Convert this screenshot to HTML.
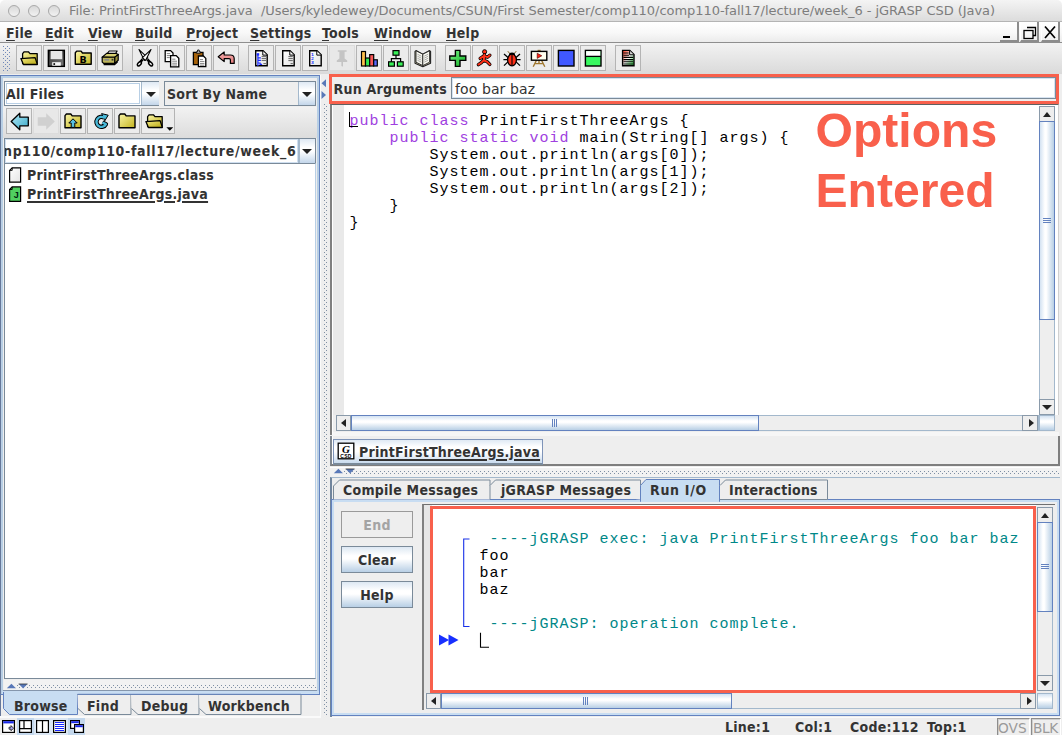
<!DOCTYPE html>
<html><head><meta charset="utf-8"><title>jGRASP</title>
<style>
*{box-sizing:border-box;margin:0;padding:0}
html,body{width:1062px;height:735px;overflow:hidden;background:#eeeeee}
body{position:relative;font-family:"DejaVu Sans Condensed","DejaVu Sans","Liberation Sans",sans-serif;font-size:14px;letter-spacing:0.250px;font-weight:bold;color:#333;}
.a{position:absolute}
.t{position:absolute;white-space:pre;line-height:16px}
u{text-decoration:underline;text-underline-offset:1.500px}
#title{left:0;top:0;width:1062px;height:22px;background:linear-gradient(#f4f4f4,#dcdcdc);border-bottom:1px solid #b4b4b4}
.tl{position:absolute;top:4.500px;width:12.500px;height:12.500px;border-radius:50%;border:1px solid #a9a9a9;background:linear-gradient(#d8d8d8,#f2f2f2)}
#title .t{font-family:"DejaVu Sans","Liberation Sans",sans-serif;font-size:13px;font-weight:normal;color:#7d7d7d;top:3px;left:69px;letter-spacing:-0.048px}
#menubar{left:0;top:22px;width:1062px;height:21px;background:linear-gradient(#ffffff 0%,#f8f8f8 55%,#ebebeb 100%);border-bottom:1px solid #8e8e8e}
#menubar .t{top:3px;color:#333}
.wb{position:absolute;top:0;height:20px;width:19px;border-right:2px solid #8c8c8c;border-bottom:2px solid #8c8c8c;border-left:1px solid #fff}
#toolbar{left:0;top:43px;width:1062px;height:31px;background:linear-gradient(#f2f2f2,#dadada)}
.tb{position:absolute;width:26px;height:26px;border:1px solid #b4b4b4;background:#ececec}
.tb.dis{border-color:#dcdcdc;background:#e8e8e8}
.dots{background-image:radial-gradient(circle at 0.500px 0.500px,#7088b8 0.600px,transparent 0.900px),radial-gradient(circle at 0.500px 0.500px,#7088b8 0.600px,transparent 0.900px);background-size:4px 4px,4px 4px;background-position:0 0,2px 2px}
.dots2{background-image:radial-gradient(circle at 0.500px 0.500px,#7f8fa4 0.550px,transparent 0.850px),radial-gradient(circle at 0.500px 0.500px,#7f8fa4 0.550px,transparent 0.850px);background-size:4px 4px,4px 4px;background-position:0 0,2px 2px}
.btn{background:linear-gradient(#dde8f3 0%,#ffffff 35%,#ffffff 48%,#b8cfe5 100%);border:1px solid #7a8a99}
.cb{border:1px solid #7a8a99;background:#fff;box-shadow:0 0 0 0 #000}
.cbb{background:linear-gradient(#dfe9f4 0%,#ffffff 35%,#ffffff 50%,#c3d6ea 100%);border-left:1px solid #a3b8cc}
.sbtn{background:#eeeeee;border:1px solid #8a9aaa}
.sb-h{background:linear-gradient(#d3e2f2 0%,#ffffff 35%,#ffffff 45%,#b8cfe5 100%);border:1px solid #6382bf}
.sb-v{background:linear-gradient(90deg,#d3e2f2 0%,#ffffff 35%,#ffffff 45%,#b8cfe5 100%);border:1px solid #6382bf}
.grip-h{position:absolute;left:50%;top:3px;width:5px;height:8px;margin-left:-3px;background:repeating-linear-gradient(90deg,#6382bf 0,#6382bf 1px,transparent 1px,transparent 2px)}
.grip-v{position:absolute;top:50%;left:3px;height:5px;width:8px;margin-top:-3px;background:repeating-linear-gradient(#6382bf 0,#6382bf 1px,transparent 1px,transparent 2px)}
.arr-d{position:absolute;width:0;height:0;border-left:5px solid transparent;border-right:5px solid transparent;border-top:5px solid #222}
.arr-u{position:absolute;width:0;height:0;border-left:4.500px solid transparent;border-right:4.500px solid transparent;border-bottom:5px solid #222}
.arr-l{position:absolute;width:0;height:0;border-top:4.500px solid transparent;border-bottom:4.500px solid transparent;border-right:5px solid #222}
.arr-r{position:absolute;width:0;height:0;border-top:4.500px solid transparent;border-bottom:4.500px solid transparent;border-left:5px solid #222}
.mono{font-family:"Liberation Mono","DejaVu Sans Mono",monospace;font-weight:normal;font-size:15px;letter-spacing:1px;line-height:17px;white-space:pre;position:absolute}
.kw{color:#a040e0}
.tl2{color:#008888}
</style></head><body>
<svg width="0" height="0" style="position:absolute"><defs>
<linearGradient id="gy" x1="0" y1="0" x2="1" y2="1"><stop offset="0" stop-color="#fbf6a8"/><stop offset="1" stop-color="#c2b21c"/></linearGradient>
<linearGradient id="gy2" x1="0" y1="0" x2="1" y2="1"><stop offset="0" stop-color="#f3ea84"/><stop offset="1" stop-color="#b8a810"/></linearGradient>
<linearGradient id="gg" x1="0" y1="0" x2="1" y2="1"><stop offset="0" stop-color="#7cf58a"/><stop offset="1" stop-color="#0cae1e"/></linearGradient>
<linearGradient id="gk" x1="0" y1="0" x2="1" y2="1"><stop offset="0" stop-color="#2e2e2e"/><stop offset="1" stop-color="#7a7a7a"/></linearGradient>
<linearGradient id="gd" x1="0" y1="0" x2="1" y2="1"><stop offset="0" stop-color="#ffffff"/><stop offset="1" stop-color="#e4e4e4"/></linearGradient>
<linearGradient id="grg" x1="0" y1="0" x2="1" y2="1"><stop offset="0" stop-color="#ff2a10"/><stop offset="0.5" stop-color="#ffffff"/><stop offset="1" stop-color="#18d030"/></linearGradient>
<linearGradient id="gp" x1="0" y1="0" x2="0" y2="1"><stop offset="0" stop-color="#f8b0b0"/><stop offset="1" stop-color="#e07878"/></linearGradient>
<linearGradient id="gc" x1="0" y1="0" x2="1" y2="1"><stop offset="0" stop-color="#b8ecf8"/><stop offset="1" stop-color="#38a8c8"/></linearGradient>
</defs></svg>
<!-- TITLE BAR -->
<div class="a" style="left:0;top:0;width:1062px;height:6px;background:#fff"></div>
<div id="title" class="a" style="border-radius:5px 5px 0 0">
 <div class="tl" style="left:7.500px"></div><div class="tl" style="left:27.500px"></div><div class="tl" style="left:47.500px"></div>
 <div class="t">File: PrintFirstThreeArgs.java  /Users/kyledewey/Documents/CSUN/First Semester/comp110/comp110-fall17/lecture/week_6 - jGRASP CSD (Java)</div>
</div>
<!-- MENU BAR -->
<div id="menubar" class="a">
 <div class="t" style="left:6px"><u>F</u>ile</div>
 <div class="t" style="left:45px"><u>E</u>dit</div>
 <div class="t" style="left:88px"><u>V</u>iew</div>
 <div class="t" style="left:135px"><u>B</u>uild</div>
 <div class="t" style="left:186px"><u>P</u>roject</div>
 <div class="t" style="left:250px"><u>S</u>ettings</div>
 <div class="t" style="left:322px"><u>T</u>ools</div>
 <div class="t" style="left:374px"><u>W</u>indow</div>
 <div class="t" style="left:446px"><u>H</u>elp</div>
 <div class="wb" style="left:1000px;border-left:none"></div>
 <div class="wb" style="left:1020px"></div>
 <div class="wb" style="left:1041px"></div>
 <svg class="a" style="left:1000px;top:0" width="62" height="21" viewBox="0 0 62 21"><path d="M3 15h7" stroke="#000" stroke-width="2"/><path d="M27 5.500h8.500v8H33" fill="none" stroke="#000" stroke-width="1.300"/><rect x="24" y="8.500" width="9" height="8" fill="none" stroke="#000" stroke-width="1.300"/><path d="M45 4.500l10 11.500M55 4.500L45 16" stroke="#000" stroke-width="1.700"/></svg>
</div>
<!-- TOOLBAR -->
<div id="toolbar" class="a">
 <div class="a dots" style="left:3.200px;top:3px;width:8px;height:25px"></div>
<div class="tb" style="left:16px;top:2px"><svg width="26" height="26" viewBox="0 0 26 26" style="position:absolute;left:-1px;top:-1px"><path d="M6.6 18.6V8.6l1.6-1.8h4.2l1.6 1.8h7.2v9.8z" fill="url(#gy)" stroke="#000" stroke-width="1.3" stroke-linejoin="round"/><path d="M4.9 13.6l14.2-1 2.3 6.9H7.4z" fill="url(#gy2)" stroke="#000" stroke-width="1.3" stroke-linejoin="round"/></svg></div>
<div class="tb" style="left:43px;top:2px"><svg width="26" height="26" viewBox="0 0 26 26" style="position:absolute;left:-1px;top:-1px"><rect x="5.4" y="5.4" width="15.9" height="15.9" fill="url(#gk)" stroke="#000" stroke-width="1.5"/><rect x="7.6" y="6" width="11.6" height="8.2" fill="#e6e6e6"/><rect x="9.2" y="17.2" width="8.6" height="3.5" fill="#f4f4f4"/><rect x="10.4" y="18.2" width="1.7" height="1.7" fill="#000"/></svg></div>
<div class="tb" style="left:70px;top:2px"><svg width="26" height="26" viewBox="0 0 26 26" style="position:absolute;left:-1px;top:-1px"><path d="M5.3 19.3V7.7l1.4-1.6h4.4l1.4 1.9h8.7v11.3z" fill="url(#gy)" stroke="#000" stroke-width="1.4" stroke-linejoin="round"/><text x="13.2" y="17.6" font-family="DejaVu Sans" font-weight="bold" font-size="9.5" text-anchor="middle" fill="#000">B</text></svg></div>
<div class="tb" style="left:97px;top:2px"><svg width="26" height="26" viewBox="0 0 26 26" style="position:absolute;left:-1px;top:-1px"><path d="M10.2 8.6l2-2.6h8l-1.8 2.8z" fill="#fff" stroke="#000" stroke-width="1.1" stroke-linejoin="round"/><path d="M5.2 12.2l4.4-3.8h9.6l2 1.2-3.2 3.2z" fill="#d8d070" stroke="#000" stroke-width="1.2" stroke-linejoin="round"/><path d="M5.2 12.2h12.6v6.2H6.6l-1.4-1.4z" fill="#bcb458" stroke="#000" stroke-width="1.2" stroke-linejoin="round"/><path d="M17.8 12.2l3.4-2.8v5.8l-3.4 3.2z" fill="#98903c" stroke="#000" stroke-width="1.2" stroke-linejoin="round"/><rect x="7.4" y="14" width="4.6" height="1.7" fill="#8c8c8c"/><rect x="14.6" y="13.8" width="1.8" height="1.8" fill="#333"/><path d="M6.6 19.6h11l3-2.8" fill="none" stroke="#000" stroke-width="1.2"/></svg></div>
<div class="tb" style="left:132px;top:2px"><svg width="26" height="26" viewBox="0 0 26 26" style="position:absolute;left:-1px;top:-1px"><path d="M15.400 14.400l2.800 3.200M10.600 14.400l-2.800 3.200" stroke="#000" stroke-width="2.600"/><path d="M7 4.600L15.800 12.800l-3.400 2.600z" fill="#fff" stroke="#000" stroke-width="1.100" stroke-linejoin="round"/><path d="M19 4.600L10.200 12.800l3.400 2.600z" fill="#fff" stroke="#000" stroke-width="1.100" stroke-linejoin="round"/><ellipse cx="7.400" cy="18.800" rx="2.500" ry="1.400" transform="rotate(-48 7.400 18.800)" fill="#fff" stroke="#000" stroke-width="1.500"/><ellipse cx="18.600" cy="18.800" rx="2.500" ry="1.400" transform="rotate(48 18.600 18.800)" fill="#fff" stroke="#000" stroke-width="1.500"/></svg></div>
<div class="tb" style="left:159px;top:2px"><svg width="26" height="26" viewBox="0 0 26 26" style="position:absolute;left:-1px;top:-1px"><path d="M6.2 5.6h5.4l2.4 2.4v8.6H6.2z" fill="#fff" stroke="#000" stroke-width="1.3"/><path d="M7.8 8.6h3.4M7.8 10.6h4.4M7.8 12.6h3" stroke="#777" stroke-width="0.9"/><path d="M11.6 10.6h5.6l2.6 2.6v8.6h-8.2z" fill="#fff" stroke="#000" stroke-width="1.3"/><path d="M13.2 14.2h3.2M13.2 16.2h4.8M13.2 18.2h4.8M13.2 20h4.8" stroke="#777" stroke-width="0.9"/></svg></div>
<div class="tb" style="left:186px;top:2px"><svg width="26" height="26" viewBox="0 0 26 26" style="position:absolute;left:-1px;top:-1px"><rect x="7.4" y="7.4" width="9.6" height="12.2" fill="#a8640c" stroke="#000" stroke-width="1.3"/><path d="M10.4 8.2V6.8h1.2V5h1.6v1.8h1.2v1.4z" fill="#ddd" stroke="#000" stroke-width="0.9"/><path d="M12.4 11h5l2.4 2.4v8.2h-7.4z" fill="#fff" stroke="#000" stroke-width="1.3"/><path d="M14 14.6h3M14 16.6h4.4M14 18.6h4.4M14 20.2h4.4" stroke="#777" stroke-width="0.9"/></svg></div>
<div class="tb" style="left:213px;top:2px"><svg width="26" height="26" viewBox="0 0 26 26" style="position:absolute;left:-1px;top:-1px"><path d="M5.2 11.8l6-4.8v3h6.2c2.6 0 3.8 1.6 3.8 3.8v4.6h-3.8v-3.6c0-.8-.4-1.2-1.200-1.200h-5v3z" fill="url(#gp)" stroke="#000" stroke-width="1.2" stroke-linejoin="round"/></svg></div>
<div class="tb" style="left:248px;top:2px"><svg width="26" height="26" viewBox="0 0 26 26" style="position:absolute;left:-1px;top:-1px"><path d="M7.700 5.700h7.300l4.200 4.200v10.900H7.700z" fill="url(#gd)" stroke="#000" stroke-width="1.400" stroke-linejoin="miter"/><path d="M14.800 5.900v4.200h4.200" fill="#fff" stroke="#000" stroke-width="1"/><rect x="8.6" y="8.2" width="2.6" height="2.4" fill="#1c2cff"/><path d="M9.9 10v11M9.900 12.800h3M9.900 15.400h3M9.900 18h2.200v1.400h2" fill="none" stroke="#1c2cff" stroke-width="1.2"/><path d="M13.6 11.400h4.400M13.600 13.400h4.400M13.600 15.400h4.400M15.400 18.600h2.600" stroke="#555" stroke-width="0.9"/></svg></div>
<div class="tb" style="left:275px;top:2px"><svg width="26" height="26" viewBox="0 0 26 26" style="position:absolute;left:-1px;top:-1px"><path d="M7.700 5.700h7.300l4.200 4.200v10.900H7.700z" fill="url(#gd)" stroke="#000" stroke-width="1.400" stroke-linejoin="miter"/><path d="M14.800 5.900v4.200h4.200" fill="#fff" stroke="#000" stroke-width="1"/><path d="M13.4 11.600h4.400M13.400 13.600h4.400M13.400 15.600h4.400M15.600 18.600h2.200" stroke="#555" stroke-width="0.9"/></svg></div>
<div class="tb" style="left:302px;top:2px"><svg width="26" height="26" viewBox="0 0 26 26" style="position:absolute;left:-1px;top:-1px"><path d="M7.700 5.700h7.300l4.200 4.200v10.900H7.700z" fill="url(#gd)" stroke="#000" stroke-width="1.400" stroke-linejoin="miter"/><path d="M14.800 5.900v4.200h4.200" fill="#fff" stroke="#000" stroke-width="1"/><text x="9" y="10.800" font-family="DejaVu Sans" font-weight="bold" font-size="4.200" fill="#2840ff">1</text><text x="9" y="14.800" font-family="DejaVu Sans" font-weight="bold" font-size="4.200" fill="#2840ff">2</text><text x="9" y="18.800" font-family="DejaVu Sans" font-weight="bold" font-size="4.200" fill="#2840ff">3</text></svg></div>
<div class="tb dis" style="left:329px;top:2px"><svg width="26" height="26" viewBox="0 0 26 26" style="position:absolute;left:-1px;top:-1px"><path d="M8.800 5.200h8.800v1.600h-2v6.800l2.600 2v1.400H7.800v-1.400l2.600-2V6.800H8.800z" fill="#c4c4c4"/><path d="M12.400 17h1.600v3.400l-.8 1.600-.8-1.600z" fill="#c4c4c4"/></svg></div>
<div class="tb" style="left:356px;top:2px"><svg width="26" height="26" viewBox="0 0 26 26" style="position:absolute;left:-1px;top:-1px"><rect x="5.500" y="6.500" width="4" height="14.500" fill="#ffc04c" stroke="#000" stroke-width="1.200"/><rect x="9.500" y="13" width="4.200" height="8" fill="#30e850" stroke="#000" stroke-width="1.200"/><rect x="13.700" y="9.600" width="4" height="11.400" fill="#f85858" stroke="#000" stroke-width="1.200"/><rect x="17.700" y="14.800" width="3.600" height="6.200" fill="#5868ff" stroke="#000" stroke-width="1.200"/></svg></div>
<div class="tb" style="left:383px;top:2px"><svg width="26" height="26" viewBox="0 0 26 26" style="position:absolute;left:-1px;top:-1px"><path d="M13 10v3.600M8.400 17v-3.400h9.200V17" fill="none" stroke="#000" stroke-width="1.200"/><rect x="10" y="5.600" width="6" height="4.600" fill="#38f058" stroke="#000" stroke-width="1.200"/><rect x="5.600" y="16.800" width="5.800" height="4.400" fill="#38f058" stroke="#000" stroke-width="1.200"/><rect x="14.400" y="16.800" width="5.800" height="4.400" fill="#38f058" stroke="#000" stroke-width="1.200"/></svg></div>
<div class="tb" style="left:410px;top:2px"><svg width="26" height="26" viewBox="0 0 26 26" style="position:absolute;left:-1px;top:-1px"><path d="M12.800 9.200L6 5.600l-1 .8v11.800l7.800 3.600 7.800-3.600V6.400l-1-.8z" fill="#d8d0a8" stroke="#222" stroke-width="1.100" stroke-linejoin="round"/><path d="M12.800 9.200L6 5.800v11.400l6.800 3.400z" fill="#f8f8f0" stroke="#222" stroke-width="0.900"/><path d="M12.800 9.200l6.800-3.400v11.400l-6.800 3.400z" fill="#f8f8f0" stroke="#222" stroke-width="0.900"/><path d="M7.400 9.200l4 2M7.400 11.200l4 2M7.400 13.200l4 2M7.400 15.200l4 2M18.200 9.200l-4 2M18.200 11.200l-4 2M18.200 13.200l-4 2M18.200 15.200l-4 2" stroke="#999" stroke-width="0.800"/></svg></div>
<div class="tb" style="left:445px;top:2px"><svg width="26" height="26" viewBox="0 0 26 26" style="position:absolute;left:-1px;top:-1px"><path d="M10.400 5.400h4.600v5.600h5.800v4.400H15v6h-4.600v-6H4.800V11h5.600z" fill="url(#gg)" stroke="#000" stroke-width="1.400" stroke-linejoin="miter"/></svg></div>
<div class="tb" style="left:472px;top:2px"><svg width="26" height="26" viewBox="0 0 26 26" style="position:absolute;left:-1px;top:-1px"><circle cx="12.600" cy="6.800" r="2.100" fill="#ff3018" stroke="#000" stroke-width="0.900"/><path d="M12.400 9.600l-.6 5.600M12.200 10.800l-4 2.600M12.200 10.800l3.200 1.400 2.400-2M11.800 15.200l-2.600 2.600-2.800 1.800M11.800 15.200l3.400 1.600 2.600 2.600" fill="none" stroke="#000" stroke-width="3.400" stroke-linecap="round" stroke-linejoin="round"/><path d="M12.400 9.600l-.6 5.600M12.200 10.800l-4 2.600M12.200 10.800l3.200 1.400 2.400-2M11.800 15.200l-2.600 2.600-2.800 1.800M11.800 15.200l3.400 1.600 2.600 2.600" fill="none" stroke="#ff3018" stroke-width="1.900" stroke-linecap="round" stroke-linejoin="round"/></svg></div>
<div class="tb" style="left:499px;top:2px"><svg width="26" height="26" viewBox="0 0 26 26" style="position:absolute;left:-1px;top:-1px"><path d="M5 9l4 3.400M21 9l-4 3.400M4.400 14.600h4.800M21.600 14.600h-4.800M5 20.600l4.200-4M21 20.600l-4.200-4" stroke="#000" stroke-width="1.300"/><path d="M10.800 8.600L8.800 6.200M15.200 8.600l2-2.400" stroke="#806020" stroke-width="1"/><ellipse cx="13" cy="9.600" rx="3" ry="2.200" fill="#000"/><ellipse cx="13" cy="15" rx="4.400" ry="5.800" fill="#ff3018" stroke="#000" stroke-width="1.300"/><path d="M13 9.400v11.400" stroke="#000" stroke-width="1.100"/></svg></div>
<div class="tb" style="left:526px;top:2px"><svg width="26" height="26" viewBox="0 0 26 26" style="position:absolute;left:-1px;top:-1px"><path d="M11.600 4.800h3v2h-3z" fill="#a07830"/><path d="M10.600 15l-3.400 6.800M15.400 15l3.400 6.800M13 15v3M8.400 18.600h9.200" stroke="#a07830" stroke-width="1.400" fill="none"/><rect x="5.400" y="6.400" width="15.400" height="8.800" fill="#fffff0" stroke="#000" stroke-width="1.400"/><path d="M11.200 8.200v5.200l4.600-2.600z" fill="#ff2010" stroke="#400" stroke-width="0.600"/></svg></div>
<div class="tb" style="left:553px;top:2px"><svg width="26" height="26" viewBox="0 0 26 26" style="position:absolute;left:-1px;top:-1px"><rect x="5.400" y="5.400" width="15.600" height="15.600" fill="#4058ff" stroke="#000" stroke-width="1.400"/></svg></div>
<div class="tb" style="left:580px;top:2px"><svg width="26" height="26" viewBox="0 0 26 26" style="position:absolute;left:-1px;top:-1px"><rect x="5.400" y="5.400" width="15.600" height="15.600" fill="#38f860" stroke="#000" stroke-width="1.400"/><rect x="6.100" y="6.100" width="14.200" height="5" fill="#fff"/><path d="M5.400 11.400h15.600" stroke="#000" stroke-width="1.300"/></svg></div>
<div class="tb" style="left:615px;top:2px"><svg width="26" height="26" viewBox="0 0 26 26" style="position:absolute;left:-1px;top:-1px"><path d="M7.600 5.400h7.200l4.200 4.200v11.200H7.600z" fill="url(#grg)" stroke="#000" stroke-width="1.400"/><path d="M14.600 5.600v4.200h4.200" fill="#ddd" stroke="#000" stroke-width="1"/><path d="M8.400 8h5.200M8.400 10.200h5.600M8.400 12.400h9.800M8.400 14.600h9.800M8.400 16.800h9.800M8.400 19h9.800" stroke="#000" stroke-width="1.100"/></svg></div>
</div>
<!-- ================= LEFT PANEL ================= -->
<div class="a" style="left:0;top:75px;width:320px;height:641px;background:#eeeeee;border-left:1.500px solid #66789a"></div><div class="a" style="left:0;top:75px;width:320px;height:620px;background:#eeeeee;border:1px solid #6382bf;border-left:1.500px solid #66789a;box-shadow:inset 0 0 0 2px #b8cfe5"></div><div class="a" style="left:1.500px;top:691px;width:317.500px;height:3px;background:#c8ddf2"></div>
<!-- combo 1 -->
<div class="a cb" style="left:4px;top:81px;width:155px;height:25px"><div class="a" style="left:1px;top:1px;width:134px;height:21px;background:#fff;border:1px solid #b8cfe5"></div><div class="a cbb" style="left:136px;top:0;width:18px;height:23px"></div><div class="arr-d" style="left:140.500px;top:9.500px"></div></div>
<div class="t" style="left:6px;top:86px">All Files</div>
<!-- combo 2 -->
<div class="a cb" style="left:164px;top:81px;width:152px;height:25px;background:#eeeeee"><div class="a cbb" style="left:133px;top:0;width:17px;height:23px"></div><div class="arr-d" style="left:136.500px;top:9.500px"></div></div>
<div class="t" style="left:167px;top:86px">Sort By Name</div>
<!-- nav buttons -->
<div class="a" style="left:3px;top:107px;width:314px;height:31px;background:linear-gradient(#f2f2f2,#dcdcdc)"></div>
<div class="tb" style="left:6px;top:108px"><svg width="26" height="26" viewBox="0 0 26 26" style="position:absolute;left:-1px;top:-1px"><path d="M5.200 13.500L13.800 5.200V9.200H22.300V17.800H13.800V21.800z" fill="url(#gc)" stroke="#000" stroke-width="1.300" stroke-linejoin="round"/></svg></div>
<div class="tb dis" style="left:33px;top:108px"><svg width="26" height="26" viewBox="0 0 26 26" style="position:absolute;left:-1px;top:-1px"><path d="M21.800 13.500L13.200 5.200V9.200H4.700V17.800H13.200V21.800z" fill="#d0d0d0"/></svg></div>
<div class="tb" style="left:60px;top:108px"><svg width="26" height="26" viewBox="0 0 26 26" style="position:absolute;left:-1px;top:-1px"><path d="M5 19.800V7.600l1.400-1.600h4.400l1.400 1.900h8.800v11.900z" fill="url(#gy)" stroke="#000" stroke-width="1.400" stroke-linejoin="round"/><path d="M13 10.800l4.200 4.200h-2.400v4.400h-3.600v-4.400H8.800z" fill="#58c0e0" stroke="#000" stroke-width="1"/></svg></div>
<div class="tb" style="left:87px;top:108px"><svg width="26" height="26" viewBox="0 0 26 26" style="position:absolute;left:-1px;top:-1px"><path d="M17.400 9.800A5 5 0 1 0 18.900 16.200L15.400 14.600" fill="none" stroke="#000" stroke-width="4.400" stroke-linejoin="round"/><path d="M14.600 5.600l6.600 1.600-3.400 5.600z" fill="#48b8d8" stroke="#000" stroke-width="1" stroke-linejoin="round"/><path d="M17.400 9.800A5 5 0 1 0 18.900 16.200L15.400 14.600" fill="none" stroke="#48b8d8" stroke-width="2.400" stroke-linejoin="round"/></svg></div>
<div class="tb" style="left:114px;top:108px"><svg width="26" height="26" viewBox="0 0 26 26" style="position:absolute;left:-1px;top:-1px"><path d="M5 19.800V7.600l1.400-1.600h4.400l1.400 1.900h8.800v11.900z" fill="url(#gy)" stroke="#000" stroke-width="1.400" stroke-linejoin="round"/></svg></div>
<div class="tb" style="left:141px;top:108px;width:34px"><svg width="34" height="26" viewBox="0 0 34 26" style="position:absolute;left:-1px;top:-1px"><path d="M6.600 18.600V8.600l1.600-1.800h4.200l1.600 1.800h7.200v9.800z" fill="url(#gy)" stroke="#000" stroke-width="1.300" stroke-linejoin="round"/><path d="M4.900 13.600l14.200-1 2.300 6.900H7.400z" fill="url(#gy2)" stroke="#000" stroke-width="1.300" stroke-linejoin="round"/><path d="M25.400 19.200h6.800l-3.400 3.600z" fill="#000"/></svg></div>
<!-- path combo -->
<div class="a cb" style="left:4px;top:138px;width:312px;height:25.500px;background:#fff"><div class="a" style="left:0;top:0;width:293.500px;height:23.500px;border-right:1px solid #a3b8cc;overflow:hidden;box-shadow:inset 0 0 0 1px #cfdff0"><div class="t" style="left:-2px;top:4px;letter-spacing:0.660px">np110/comp110-fall17/lecture/week_6</div></div><div class="a cbb" style="left:293.500px;top:0;width:16.500px;height:23.500px"></div><div class="arr-d" style="left:297.200px;top:10px"></div></div>
<!-- file list -->
<div class="a" style="left:4px;top:163px;width:312px;height:516px;background:#fff;border:1px solid #7a8a99;border-right-color:#b8cfe5;border-bottom-color:#7a8a99"></div>
<svg class="a" style="left:8px;top:166px" width="15" height="38" viewBox="0 0 15 38"><path d="M4.200 1.800H12.600v14.400H1.600V4.400z" fill="url(#gd)" stroke="#000" stroke-width="1.200"/><path d="M4.200 1.800v2.600H1.600" fill="none" stroke="#000" stroke-width="0.900"/><path d="M4.200 20.900H12.600v14.400H1.600V23.500z" fill="#50d060" stroke="#000" stroke-width="1.200"/><path d="M4.200 20.900v2.600H1.600" fill="none" stroke="#000" stroke-width="0.900"/><text x="8.400" y="32.300" font-family="Liberation Sans" font-size="9" text-anchor="middle" fill="#021">J</text></svg>
<div class="t" style="left:27px;top:167px">PrintFirstThreeArgs.class</div>
<div class="t" style="left:27px;top:185.500px;text-decoration:underline;text-underline-offset:1.500px;text-decoration-thickness:1.500px">PrintFirstThreeArgs.java</div>
<!-- left divider with arrows -->
<div class="a" style="left:4px;top:680px;width:312px;height:10px;background:#f2f2f2"></div><div class="a dots2" style="left:16.900px;top:684.500px;width:299px;height:4px"></div>
<svg class="a" style="left:5px;top:681.500px" width="24" height="8" viewBox="0 0 24 8"><path d="M1.800 6.200l4.600-4.400 4.600 4.400z" fill="#5878b8"/><path d="M13.800 2l4.300 4.600L22.400 2z" fill="#5878b8"/><path d="M13.600 2h9" stroke="#333" stroke-width="0.800"/></svg>
<div class="a" style="left:3px;top:690px;width:314px;height:1px;background:#8596ac"></div>
<!-- bottom-left tabs -->
<svg class="a" style="left:0;top:692px" width="322" height="26" viewBox="0 0 322 26">
 <path d="M3.500 0V16.500L9.500 22.500H77.500V0z" fill="#c8ddf2"/><path d="M3.500 0V16.500L9.500 22.500H77.500V2.500" fill="none" stroke="#6382bf" stroke-width="1"/>
 <path d="M77.500 2.500H131V22.500H84.500L78 16.500" fill="#eeeeee" stroke="#7a8a99" stroke-width="1"/>
 <path d="M131 2.500H199V22.500H138L131.500 16.500" fill="#eeeeee" stroke="#7a8a99" stroke-width="1"/>
 <path d="M199 2.500H301V22.500H206L199.500 16.500" fill="#eeeeee" stroke="#7a8a99" stroke-width="1"/>
 <path d="M77.500 2.300H301" stroke="#6382bf" stroke-width="1"/>
</svg>
<div class="t" style="left:14px;top:697.500px">Browse</div>
<div class="t" style="left:87px;top:697.500px">Find</div>
<div class="t" style="left:141px;top:697.500px">Debug</div>
<div class="t" style="left:208px;top:697.500px">Workbench</div>
<!-- bottom-left icons -->
<div class="a" style="left:17px;top:718px;width:68px;height:17px;background:#dbe7f4"></div><div class="a" style="left:17px;top:718px;width:17px;height:17px;background:#c3d7ec"></div><div class="a" style="left:68px;top:718px;width:17px;height:17px;background:#c3d7ec"></div>
<svg class="a" style="left:0;top:718px" width="90" height="17" viewBox="0 0 90 17">
 <rect x="2.600" y="2.600" width="11.800" height="11.800" fill="#fff" stroke="#000" stroke-width="1.200"/><rect x="3.200" y="3.200" width="10.600" height="2.200" fill="#1828e8"/><path d="M9 9.200h2v-1.600l2.600 2.600-2.600 2.600v-1.600H9z" fill="#a8a8f0" stroke="#000" stroke-width="0.700"/>
 <rect x="19.600" y="2.600" width="11.800" height="11.800" fill="#fff" stroke="#000" stroke-width="1.200"/><path d="M24 2.600v8h7.400M19.600 10.600h4.400" stroke="#000" stroke-width="1.200" fill="none"/>
 <rect x="36.600" y="2.600" width="11.800" height="11.800" fill="#fff" stroke="#000" stroke-width="1.200"/><path d="M42.500 2.600v11.800" stroke="#000" stroke-width="1.200"/>
 <rect x="53.600" y="2.600" width="11.800" height="11.800" fill="#fff" stroke="#000" stroke-width="1.200"/><path d="M55 4.500h9M55 6.500h9M55 8.500h9M55 10.500h9M55 12.500h9" stroke="#1828ff" stroke-width="1"/>
 <rect x="70.600" y="2.600" width="8.800" height="7.800" fill="#fff" stroke="#000" stroke-width="1.200"/><rect x="71.200" y="3.200" width="7.600" height="2" fill="#1828e8"/><rect x="74.600" y="6.600" width="8.800" height="7.800" fill="#fff" stroke="#000" stroke-width="1.200"/><rect x="75.200" y="7.200" width="7.600" height="2" fill="#1828e8"/>
</svg>

<!-- vertical divider between left and right -->
<div class="a" style="left:320px;top:75px;width:1.300px;height:642px;background:#fafafa"></div><div class="a" style="left:0;top:716.300px;width:321px;height:1.400px;background:#fafafa"></div>
<div class="a dots2" style="left:323.900px;top:104px;width:4px;height:612px"></div>
<svg class="a" style="left:320px;top:78px" width="10" height="26" viewBox="0 0 10 26"><path d="M6 1.200L1.500 5.200 6 9.200z" fill="#5878b8"/><path d="M1.500 13l4.500 4L1.500 21z" fill="#5878b8"/></svg>
<!-- ================= RUN ARGUMENTS ================= -->
<div class="a" style="left:329px;top:73.500px;width:730px;height:30px;border:3.200px solid #f8604c;background:#eeeeee"></div>
<div class="t" style="left:333.500px;top:81px">Run Arguments</div>
<div class="a" style="left:451px;top:77px;width:605px;height:22px;background:#fff;border:1px solid #7a8a99;box-shadow:inset 0 0 0 1px #d6e3f1"></div>
<div class="t" style="left:455px;top:81px;font-weight:normal;font-family:'DejaVu Sans',sans-serif;font-size:14px;letter-spacing:0.100px">foo bar baz</div>

<!-- ================= EDITOR ================= -->
<div class="a" style="left:330px;top:103.500px;width:729px;height:331.500px;background:#fff;border-left:2.500px solid #808080;border-top:1px solid #606060;border-right:1px solid #d0d0d0"></div>
<div class="a" style="left:333px;top:105px;width:10.500px;height:310px;background:#e9e9e9"></div>
<div class="a" style="left:333px;top:415px;width:726px;height:18px;background:#eeeeee"></div>
<!-- code -->
<div class="mono" style="left:349.500px;top:112.500px;color:#000"><span class="kw">public class</span> PrintFirstThreeArgs {
    <span class="kw">public static void</span> main(String[] args) {
        System.out.println(args[0]);
        System.out.println(args[1]);
        System.out.println(args[2]);
    }
}</div>
<div class="a" style="left:349.300px;top:112px;width:1.100px;height:15px;background:#000"></div>
<div class="a" style="left:349.300px;top:126px;width:9px;height:1.100px;background:#000"></div>
<!-- Options Entered -->
<div class="a" style="left:815.500px;top:101px;width:200px;font-family:'Liberation Sans',sans-serif;font-weight:bold;font-size:48.100px;line-height:59.700px;color:#f9604c;white-space:pre;letter-spacing:0">Options
Entered</div>
<!-- editor v scrollbar -->
<div class="a" style="left:1039px;top:106px;width:16px;height:309px;background:#eeeeee;border:1px solid #a3b8cc"></div>
<div class="a sbtn" style="left:1039px;top:106px;width:16px;height:15.500px"><div class="arr-u" style="left:3px;top:4.500px"></div></div>
<div class="a sb-v" style="left:1039px;top:121px;width:16px;height:199px"><div class="grip-v"></div></div>
<div class="a sbtn" style="left:1039px;top:399px;width:16px;height:15.500px"><div class="arr-d" style="left:2px;top:5px"></div></div>
<!-- editor h scrollbar -->
<div class="a" style="left:336px;top:415px;width:703px;height:16px;background:#eeeeee;border:1px solid #a3b8cc"></div>
<div class="a sbtn" style="left:336px;top:415px;width:15px;height:16px"><div class="arr-l" style="left:4px;top:3px"></div></div>
<div class="a sb-h" style="left:350.500px;top:415px;width:408px;height:16px"><div class="grip-h"></div></div>
<div class="a sbtn" style="left:1022px;top:415px;width:16px;height:16px"><div class="arr-r" style="left:6px;top:3px"></div></div>
<div class="a sb-h" style="left:1039px;top:415px;width:16px;height:16px;border-color:#a3b8cc"></div>

<!-- file tab bar -->
<div class="a" style="left:332.500px;top:432px;width:726px;height:4.500px;background:#f6f6f6"></div><div class="a" style="left:330px;top:436px;width:729.500px;height:30px;background:#eeeeee;border-bottom:2px solid #7e7e7e;border-right:2px solid #7e7e7e;border-left:2px solid #808890;box-shadow:inset 1px 0 0 #fff"></div>
<div class="a" style="left:333px;top:438.500px;width:210px;height:26.500px;background:linear-gradient(#dfe9f4 0%,#ffffff 30%,#ffffff 50%,#c9dbee 100%);border:1px solid #7f94b8;border-bottom:2px solid #7a8a99"></div>
<svg class="a" style="left:337px;top:442px" width="18" height="18" viewBox="0 0 18 18"><rect x="1.200" y="1.200" width="15.600" height="15.600" fill="#fff" stroke="#000" stroke-width="1.300"/><text x="9" y="10.500" font-family="Liberation Serif" font-style="italic" font-weight="bold" font-size="11" text-anchor="middle" fill="#000">G</text><text x="9" y="15.500" font-family="Liberation Sans" font-size="5" text-anchor="middle" fill="#000">CSD</text></svg>
<div class="t" style="left:359px;top:444px;text-decoration:underline;text-underline-offset:1.500px;text-decoration-thickness:1.500px">PrintFirstThreeArgs.java</div>

<!-- horizontal divider w arrows -->
<div class="a" style="left:330px;top:466.500px;width:730px;height:10px;background:linear-gradient(#fff 0,#fff 1px,#f2f2f2 1px)"></div><div class="a dots2" style="left:343.900px;top:470.700px;width:715px;height:4px"></div>
<svg class="a" style="left:332px;top:467px" width="24" height="8" viewBox="0 0 24 8"><path d="M1.800 6.200l4.600-4.400 4.600 4.400z" fill="#5878b8"/><path d="M13.800 2l4.300 4.600L22.400 2z" fill="#5878b8"/><path d="M13.600 2h9" stroke="#333" stroke-width="0.800"/></svg>

<!-- ================= MESSAGE PANEL ================= -->
<div class="a" style="left:329.500px;top:476.500px;width:730.500px;height:240px;background:#eeeeee;border-top:1px solid #a3b8cc;border-left:2px solid #71859d"></div><div class="a" style="left:329.500px;top:716.500px;width:731px;height:1.400px;background:#fafafa"></div>
<div class="a" style="left:331px;top:499px;width:729px;height:217px;background:#eeeeee;border:1px solid #6382bf;box-shadow:inset 0 0 0 2px #c8ddf2"></div>
<svg class="a" style="left:331px;top:477px" width="520" height="25" viewBox="0 0 520 25">
 <path d="M2.500 22.500V9L8.500 3H159V22.500" fill="#eeeeee" stroke="#7a8a99" stroke-width="1"/>
 <path d="M159 8.500L164.500 3H309.500V22.500" fill="#eeeeee" stroke="#7a8a99" stroke-width="1"/>
 <path d="M309.500 24.500V8.500L315 2.500H388.500V24.500z" fill="#c8ddf2" stroke="#6382bf" stroke-width="1"/>
 <path d="M389 8.500L394.500 3H496.500V22.500H389" fill="#eeeeee" stroke="#7a8a99" stroke-width="1"/>
 <path d="M310 24.500H388" stroke="#c8ddf2" stroke-width="2"/>
</svg>
<div class="t" style="left:343px;top:482px">Compile Messages</div>
<div class="t" style="left:501px;top:482px">jGRASP Messages</div>
<div class="t" style="left:650px;top:482px;letter-spacing:0.700px">Run I/O</div>
<div class="t" style="left:729px;top:482px">Interactions</div>
<!-- buttons -->
<div class="a" style="left:341px;top:511px;width:72px;height:27px;border:1px solid #9a9a9a;background:#eeeeee"></div>
<div class="t" style="left:341px;top:516.500px;width:72px;text-align:center;color:#a4a4a4">End</div>
<div class="a btn" style="left:341px;top:546px;width:72px;height:27px"></div>
<div class="t" style="left:341px;top:551.500px;width:72px;text-align:center">Clear</div>
<div class="a btn" style="left:341px;top:581px;width:72px;height:27px"></div>
<div class="t" style="left:341px;top:586.500px;width:72px;text-align:center">Help</div>
<!-- output area -->
<div class="a" style="left:421.500px;top:503.500px;width:633px;height:206px;background:#fff;border-left:2px solid #808080;border-top:1.500px solid #707070"></div>
<div class="a" style="left:423.500px;top:505px;width:8px;height:188px;background:#e6e6e6"></div><div class="a" style="left:423.500px;top:693px;width:631px;height:17px;background:#eeeeee"></div>
<div class="a" style="left:1036px;top:505px;width:18.500px;height:204px;background:#eeeeee"></div>
<div class="a" style="left:430px;top:505.500px;width:605.500px;height:187.500px;border:3.300px solid #f8604c"></div>
<div class="mono" style="left:479.500px;top:530.500px;color:#000"><span class="tl2"> ----jGRASP exec: java PrintFirstThreeArgs foo bar baz</span>
foo
bar
baz

<span class="tl2"> ----jGRASP: operation complete.</span></div>
<svg class="a" style="left:436px;top:530px" width="60" height="120" viewBox="0 0 60 120"><path d="M33.500 9H27.700V96.500H33.500" fill="none" stroke="#1830e8" stroke-width="1.100"/><path d="M3 104.500l10 5.500-10 5.500z" fill="#1830ff"/><path d="M12.500 104.500l10 5.500-10 5.500z" fill="#1830ff"/><path d="M44.500 102.800V117.200H53" fill="none" stroke="#000" stroke-width="1.100"/></svg>
<!-- output v scrollbar -->
<div class="a" style="left:1036.500px;top:507px;width:16px;height:184px;background:#eeeeee;border:1px solid #a3b8cc"></div>
<div class="a sbtn" style="left:1036.500px;top:507px;width:16px;height:15.500px"><div class="arr-u" style="left:3px;top:4.500px"></div></div>
<div class="a sb-v" style="left:1036.500px;top:522px;width:16px;height:90px"><div class="grip-v"></div></div>
<div class="a sbtn" style="left:1036.500px;top:675px;width:16px;height:15.500px"><div class="arr-d" style="left:2px;top:5px"></div></div>
<!-- output h scrollbar -->
<div class="a" style="left:426px;top:692.500px;width:610px;height:16px;background:#eeeeee;border:1px solid #a3b8cc;border-top:none"></div>
<div class="a sbtn" style="left:426px;top:692.500px;width:15px;height:16px"><div class="arr-l" style="left:4px;top:3px"></div></div>
<div class="a sb-h" style="left:440.500px;top:692.500px;width:291px;height:16px"><div class="grip-h"></div></div>
<div class="a sbtn" style="left:1019.500px;top:692.500px;width:16px;height:16px"><div class="arr-r" style="left:6px;top:3px"></div></div>
<div class="a sb-h" style="left:1036.500px;top:692.500px;width:16.500px;height:16px;border-color:#a3b8cc"></div>

<!-- ================= STATUS BAR ================= -->
<div class="t" style="left:725px;top:718.500px">Line:1</div>
<div class="t" style="left:795px;top:718.500px">Col:1</div>
<div class="t" style="left:850px;top:718.500px">Code:112</div>
<div class="t" style="left:927px;top:718.500px">Top:1</div>
<div class="a" style="left:996.500px;top:718px;width:33px;height:18px;border:1.500px solid #8c8c8c;border-right-color:#fff;box-shadow:inset 1px 1px 0 #cfcfcf"></div>
<div class="a" style="left:1030.500px;top:718px;width:30px;height:18px;border:1.500px solid #8c8c8c;border-right-color:#fff;box-shadow:inset 1px 1px 0 #cfcfcf"></div>
<div class="t" style="left:998px;top:719.500px;font-family:'DejaVu Sans',sans-serif;font-size:13.700px;font-weight:normal;color:#9a9a9a;letter-spacing:0">OVS</div>
<div class="t" style="left:1033px;top:719.500px;font-family:'DejaVu Sans',sans-serif;font-size:13.700px;font-weight:normal;color:#9a9a9a;letter-spacing:-0.400px">BLK</div>

</body></html>
